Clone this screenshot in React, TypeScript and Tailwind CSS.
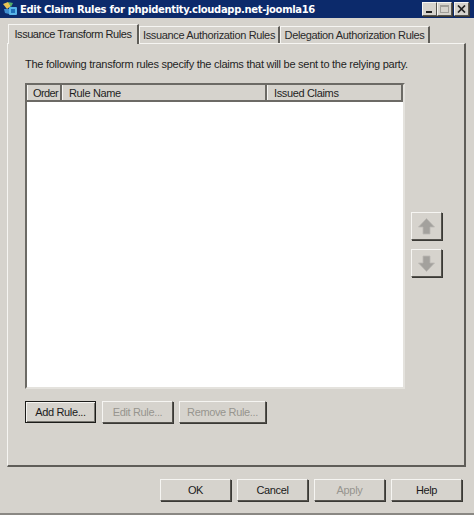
import { ReactNode } from 'react';

const raised = 'border border-t-[#f6f5f2] border-l-[#f6f5f2] border-r-[#55534e] border-b-[#55534e] shadow-[1px_1px_0_#3a3935]';

function Btn({ children, w = 'w-[71px]', disabled = false, focused = false }: { children: ReactNode; w?: string; disabled?: boolean; focused?: boolean }) {
  return (
    <div
      className={`${w} h-[22px] flex items-center justify-center text-[11px] tracking-[-0.35px] ${
        focused ? 'border border-[#1c1c1a] shadow-[inset_1px_1px_0_#f6f5f2,inset_-1px_-1px_0_#77756f]' : raised
      } ${disabled ? 'text-[#97958f]' : 'text-[#1a1a1a]'}`}
    >
      {children}
    </div>
  );
}

function Tab({ label, active = false, w }: { label: string; active?: boolean; w: string }) {
  return (
    <div
      className={`${w} flex items-center justify-center whitespace-nowrap text-[11px] border-l border-t border-[#f6f5f2] border-r-2 border-r-[#5f5d58] ${
        active ? 'h-[20px] -mb-px relative z-10 bg-[#d6d3cd] border-b-0 tracking-[-0.45px]' : 'h-[17px] text-[#2a2a2a] tracking-[-0.35px]'
      }`}
    >
      {label}
    </div>
  );
}

function Arrow({ down = false }: { down?: boolean }) {
  return (
    <div className={`${raised} w-[31px] h-[28px] flex items-center justify-center`}>
      <svg width="19" height="19" viewBox="0 0 19 19" className={down ? 'rotate-180' : ''}>
        <path d="M9.5 1.5 L17.5 10 H13 V17 H6 V10 H1.5 Z" fill="#a3a19d" stroke="#bbb9b4" strokeWidth="0.8" />
      </svg>
    </div>
  );
}

export default function App() {
  return (
    <div className="w-[474px] h-[515px] overflow-hidden flex flex-col bg-[#d6d3cd] text-[#1f1f1f] font-['Liberation_Sans',sans-serif]">
      {/* title bar */}
      <div className="h-[18px] shrink-0 flex items-center bg-[#0c2a6b] pl-[2px] pr-[5px]">
        <svg width="17" height="16" viewBox="0 0 17 16" className="shrink-0">
          <path d="M1 3 L6 1 L9 5 L5 8 Z" fill="#e9c455" />
          <path d="M6 1 L11 2 L9 6 Z" fill="#54b06a" />
          <rect x="7" y="6" width="8" height="8" rx="1" fill="#57b4e8" />
          <rect x="9" y="8" width="4" height="4" fill="#1f6fb8" />
          <path d="M2 8 L7 8 L7 13 L3 12 Z" fill="#3e8ed0" />
        </svg>
        <span className="ml-[1px] text-white font-bold text-[10px] tracking-[-0.33px] font-['DejaVu_Sans',sans-serif] whitespace-nowrap">
          Edit Claim Rules for phpidentity.cloudapp.net-joomla16
        </span>
        <div className="ml-auto flex">
          <div className={`${raised} w-[15px] h-[14px] bg-[#d6d3cd] flex items-end pl-[3px] pb-[2px]`}>
            <div className="w-[6px] h-[2px] bg-[#222]" />
          </div>
          <div className={`${raised} w-[15px] h-[14px] bg-[#d6d3cd] flex items-center justify-center`}>
            <div className="w-[9px] h-[8px] border border-t-2 border-[#a09e99]" />
          </div>
          <div className={`${raised} ml-[2px] w-[15px] h-[14px] bg-[#d6d3cd] flex items-center justify-center`}>
            <svg width="9" height="8" viewBox="0 0 9 8">
              <path d="M1 0.5 L8 7.5 M8 0.5 L1 7.5" stroke="#222" strokeWidth="1.7" />
            </svg>
          </div>
        </div>
      </div>

      {/* tabs */}
      <div className="pl-[8px] pt-[6px] flex items-end shrink-0">
        <Tab label="Issuance Transform Rules" active w="w-[131px]" />
        <Tab label="Issuance Authorization Rules" w="w-[141px]" />
        <Tab label="Delegation Authorization Rules" w="w-[150px]" />
      </div>

      {/* tab panel */}
      <div className="ml-[7px] w-[459px] h-[424px] shrink-0 border border-t-[#f6f5f2] border-l-[#f6f5f2] border-r-2 border-r-[#5f5d58] border-b-2 border-b-[#5f5d58] pl-[17px] flex flex-col">
        <p className="mt-[13px] text-[11px] tracking-[-0.26px] leading-[14px] whitespace-nowrap">
          The following transform rules specify the claims that will be sent to the relying party.
        </p>
        <div className="mt-[12px] flex">
          <div className="w-[380px] h-[306px] bg-white border-2 border-t-[#6c6a65] border-l-[#6c6a65] border-r-[#e4e2dd] border-b-[#e4e2dd] flex flex-col">
            <div className="h-[17px] flex bg-[#d6d3cd] text-[11px] tracking-[-0.35px] border-b-2 border-b-[#6c6a65] border-r-2 border-r-[#6c6a65]">
              <div className="w-[35px] pl-[5px] tracking-[-0.6px] border-r-2 border-r-[#6c6a65] border-l border-l-[#f6f5f2] leading-[17px]">Order</div>
              <div className="w-[205px] pl-[6px] border-r-2 border-r-[#6c6a65] border-l border-l-[#f6f5f2] leading-[17px]">Rule Name</div>
              <div className="flex-1 pl-[6px] border-l border-l-[#f6f5f2] leading-[17px]">Issued Claims</div>
            </div>
          </div>
          <div className="ml-[6px] mt-[129px] flex flex-col gap-[9px]">
            <Arrow />
            <Arrow down />
          </div>
        </div>
        <div className="mt-[12px] flex gap-[6px]">
          <Btn focused>Add Rule...</Btn>
          <Btn disabled>Edit Rule...</Btn>
          <Btn disabled w="w-[87px]">Remove Rule...</Btn>
        </div>
      </div>

      {/* footer buttons */}
      <div className="mt-[12px] pl-[160px] flex gap-[6px]">
        <Btn>OK</Btn>
        <Btn>Cancel</Btn>
        <Btn disabled>Apply</Btn>
        <Btn>Help</Btn>
      </div>
      <div className="mt-auto h-[2px] bg-[#8a8883]" />
    </div>
  );
}
